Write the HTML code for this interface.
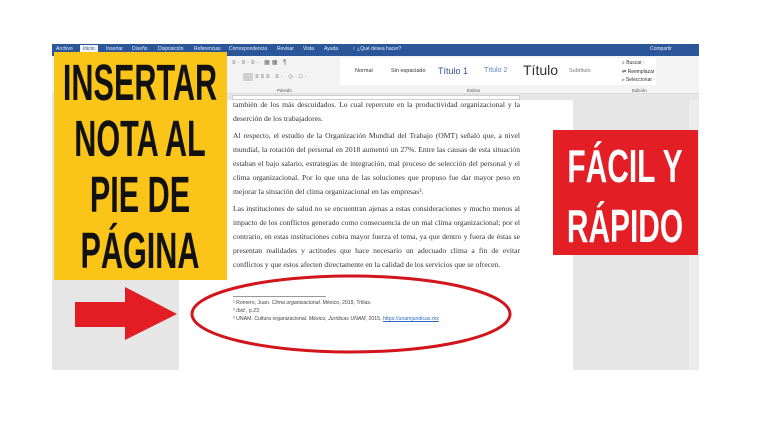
<!DOCTYPE html>
<html><head><meta charset="utf-8"><style>
*{margin:0;padding:0;box-sizing:border-box}
body{width:768px;height:432px;background:#fff;position:relative;overflow:hidden;font-family:"Liberation Sans",sans-serif}
.a{position:absolute}
.tabs span{position:absolute;top:2px;font-size:5px;color:#e8eefa}
.doc p{font-family:"Liberation Serif",serif;font-size:7.6px;line-height:14px;color:#333;text-align:justify}
.big{font-family:"Liberation Sans Narrow","Liberation Sans",sans-serif;font-weight:bold;text-align:center;transform-origin:center;white-space:nowrap}
.fn{font-size:5.2px;color:#444;line-height:8px;font-family:"Liberation Sans",sans-serif}
</style></head><body>
<div class="a" style="left:52px;top:44px;width:647px;height:12px;background:#2b579a"></div>
<div class="a tabs" style="left:52px;top:44px;width:647px;height:12px">
<span style="left:4px">Archivo</span><span style="left:28px;background:#f3f3f3;color:#2b579a;top:1px;padding:1px 3px;height:11px">Inicio</span><span style="left:54px">Insertar</span><span style="left:80px">Diseño</span><span style="left:106px">Disposición</span><span style="left:142px">Referencias</span><span style="left:177px">Correspondencia</span><span style="left:225px">Revisar</span><span style="left:251px">Vista</span><span style="left:272px">Ayuda</span><span style="left:300px">♀ ¿Qué desea hacer?</span><span style="left:598px">Compartir</span>
</div>
<div class="a" style="left:52px;top:56px;width:647px;height:38px;background:#f3f3f3;border-bottom:1px solid #ddd"></div>
<div class="a" style="left:340px;top:58px;width:316px;height:27px;background:#fff"></div>
<div class="a" style="left:355px;top:68px;font-size:5.5px;color:#333">Normal</div>
<div class="a" style="left:391px;top:68px;font-size:5.5px;color:#333">Sin espaciado</div>
<div class="a" style="left:438px;top:66px;font-size:9px;color:#2f5597">Título 1</div>
<div class="a" style="left:484px;top:67px;font-size:7px;color:#5b7fbf">Título 2</div>
<div class="a" style="left:523px;top:62px;font-size:14px;color:#333">Título</div>
<div class="a" style="left:569px;top:68px;font-size:5.5px;color:#777">Subtítulo</div>
<div class="a" style="left:277px;top:88px;font-size:4.5px;color:#555">Párrafo</div>
<div class="a" style="left:467px;top:88px;font-size:4.5px;color:#555">Estilos</div>
<div class="a" style="left:632px;top:88px;font-size:4.5px;color:#555">Edición</div>
<div class="a" style="left:622px;top:59px;font-size:5px;color:#333;line-height:8.5px">⌕ Buscar ·<br>⇄ Reemplazar<br>▹ Seleccionar ·</div>
<div class="a" style="left:232px;top:59px;width:100px;height:8px;font-size:6px;color:#666;letter-spacing:2px">≡·≡·≡· ▦▦ ¶</div>
<div class="a" style="left:243px;top:73px;width:10px;height:8px;background:#cfcfcf"></div>
<div class="a" style="left:255px;top:73px;font-size:6px;color:#666;letter-spacing:2px">≡≡≡ ≡· ◇·□·</div>
<div class="a" style="left:52px;top:94px;width:647px;height:7px;background:#e6e6e6"></div>
<div class="a" style="left:232px;top:95px;width:288px;height:5px;background:#fff;border:1px solid #ccc"></div>
<div class="a" style="left:52px;top:100px;width:647px;height:270px;background:#e6e6e6"></div>
<div class="a" style="left:689px;top:100px;width:10px;height:270px;background:#ececec"></div>
<div class="a" style="left:179px;top:100px;width:394px;height:270px;background:#fff;overflow:hidden">
<div class="a doc" style="left:54px;top:-2px;width:287px">
<p>también de los más descuidados. Lo cual repercute en la productividad organizacional y la deserción de los trabajadores.</p>
<p style="margin-top:3px">Al respecto, el estudio de la Organización Mundial del Trabajo (OMT) señaló que, a nivel mundial, la rotación del personal en 2018 aumentó un 27%. Entre las causas de esta situación estaban el bajo salario, estrategias de integración, mal proceso de selección del personal y el clima organizacional. Por lo que una de las soluciones que propuso fue dar mayor peso en mejorar la situación del clima organizacional en las empresas³.</p>
<p style="margin-top:3px">Las instituciones de salud no se encuentran ajenas a estas consideraciones y mucho menos al impacto de los conflictos generado como consecuencia de un mal clima organizacional; por el contrario, en estas instituciones cobra mayor fuerza el tema, ya que dentro y fuera de éstas se presentan realidades y actitudes que hace necesario un adecuado clima a fin de evitar conflictos y que estos afecten directamente en la calidad de los servicios que se ofrecen.</p>
</div></div>
<div class="a" style="left:233px;top:296px;width:93px;height:1px;background:#999"></div>
<div class="a fn" style="left:233px;top:299px;white-space:nowrap">¹ Romero, Juan. <i>Clima organizacional</i>. México, 2019, Trillas.<br>² <i>Ibid.</i>, p.23<br>³ UNAM. Cultura organizacional. <i>México, Jurídicas UNAM</i>, 2015, <span style="color:#2e6bc0;text-decoration:underline">https://unamjuridicas.mx</span></div>
<svg class="a" style="left:0;top:0" width="768" height="432">
<ellipse cx="351" cy="314" rx="159" ry="38" fill="none" stroke="#d2141c" stroke-width="3"/>
<polygon points="75,302 125,302 125,287 177,314 125,340 125,327 75,327" fill="#e21d24"/>
</svg>
<div class="a" style="left:54px;top:52px;width:173px;height:228px;background:#fbc418"></div>
<div class="a big" style="left:-10px;top:55px;width:300px;font-size:51px;line-height:56px;color:#111;transform:scaleX(0.6)">INSERTAR<br>NOTA AL<br>PIE DE<br>PÁGINA</div>
<div class="a" style="left:553px;top:130px;width:145px;height:125px;background:#e31e25"></div>
<div class="a big" style="left:475px;top:136px;width:300px;font-size:46px;line-height:60px;color:#fff;transform:scaleX(0.65)">FÁCIL Y<br>RÁPIDO</div>
</body></html>
